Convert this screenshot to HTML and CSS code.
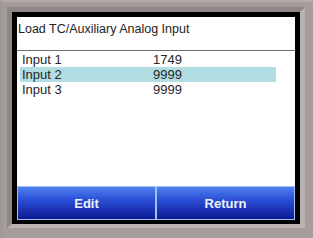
FILE: index.html
```html
<!DOCTYPE html>
<html lang="en">
<head>
  <meta charset="UTF-8">
  <title>Load TC/Auxiliary Analog Input</title>
  <link rel="stylesheet" href="styles.css">
</head>
<body>
  <div class="bezel">
    <div class="well">
      <div class="screen">
        <div class="content">
          <div class="title">Load TC/Auxiliary Analog Input</div>
          <div class="list">
            <div class="row"><span class="name">Input 1</span><span class="value">1749</span></div>
            <div class="row selected"><span class="name">Input 2</span><span class="value">9999</span></div>
            <div class="row"><span class="name">Input 3</span><span class="value">9999</span></div>
          </div>
        </div>
        <div class="buttons">
          <button class="btn">Edit</button>
          <button class="btn">Return</button>
        </div>
      </div>
    </div>
  </div>
</body>
</html>
```

FILE: styles.css
```css
body {
  margin: 0;
  font-family: "Liberation Sans", Arial, sans-serif;
  background-color: #a59d9b;
}
.bezel {
  width: 313px;
  height: 238px;
  box-sizing: border-box;
  padding: 5px 8px 10px 4px;
  background-color: #a59d9b;
  border-top: 2px solid #b3abaa;
  border-left: 3px solid #a09896;
}
.well {
  border-style: solid;
  border-width: 5px 5px 4px 5px;
  border-color: #8f8785 #bbb3b1 #bbb3b1 #8f8785;
}
.screen {
  background-color: #000;
  padding: 5px 5px 4px 5px;
  display: flex;
  flex-direction: column;
}
.content {
  background-color: #fff;
  height: 169px;
}
.title {
  height: 34px;
  box-sizing: border-box;
  padding: 5px 0 0 1px;
  font-size: 12.5px;
  color: #222;
  border-bottom: 1px solid #6e6e6e;
}
.list {
  padding: 1px 19px 0 3px;
}
.row {
  display: flex;
  height: 15px;
  line-height: 15px;
  font-size: 13px;
  color: #262626;
}
.row.selected {
  background-color: #b1dde3;
}
.name {
  width: 131px;
  padding-left: 2px;
}
.buttons {
  display: flex;
  height: 34px;
}
.btn {
  flex: 1;
  margin: 0;
  border: 1px solid #9ec2f4;
  background: linear-gradient(#4f82f0, #2a4ed6 40%, #0d1b92);
  color: #eef2fa;
  font-family: "Liberation Sans", Arial, sans-serif;
  font-size: 13px;
  font-weight: bold;
  padding: 0;
}
```
